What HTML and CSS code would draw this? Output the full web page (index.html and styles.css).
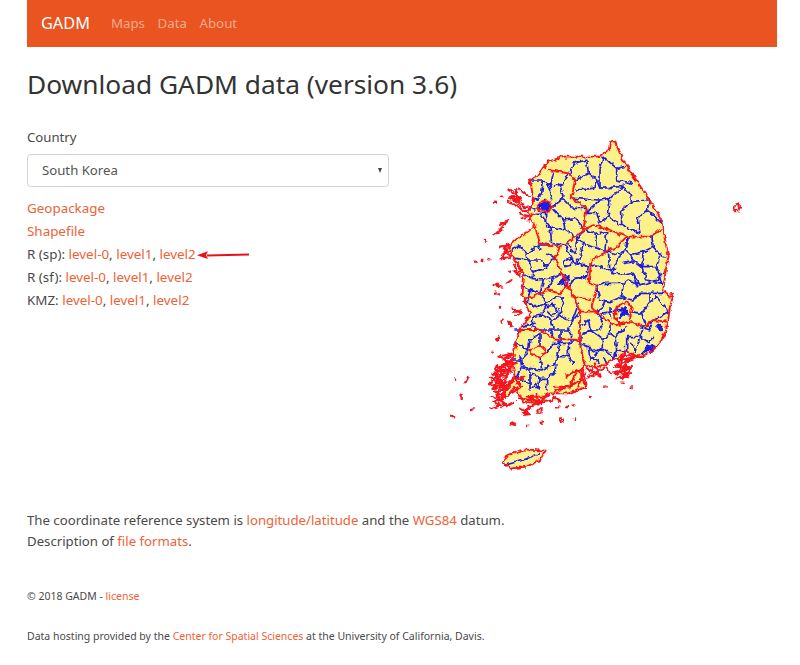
FILE: index.html
```html
<!DOCTYPE html>
<html lang="en">
<head>
<meta charset="utf-8">
<title>GADM</title>
<link rel="stylesheet" href="styles.css">
</head>
<body>
<div class="page">
  <nav class="navbar">
    <a class="brand" href="#">GADM</a>
    <a class="nav-link" href="#">Maps</a>
    <a class="nav-link" href="#">Data</a>
    <a class="nav-link" href="#">About</a>
  </nav>
  <h1 class="title">Download GADM data (version 3.6)</h1>
  <div class="row">
    <div class="left">
      <label class="label" for="country">Country</label>
      <div class="select" id="country"><span>South Korea</span><span class="caret"></span></div>
      <ul class="links">
        <li><a href="#">Geopackage</a></li>
        <li><a href="#">Shapefile</a></li>
        <li>R (sp): <a href="#">level-0</a>, <a href="#">level1</a>, <a href="#">level2</a><svg class="arrow" viewBox="0 0 54 10" width="54" height="10"><path d="M53 4.6 11 5.4" stroke="#e8101a" stroke-width="2" fill="none"/><path d="M1 5.2 12 1.2 10 5.2 12 9Z" fill="#e8101a"/></svg></li>
        <li>R (sf): <a href="#">level-0</a>, <a href="#">level1</a>, <a href="#">level2</a></li>
        <li>KMZ: <a href="#">level-0</a>, <a href="#">level1</a>, <a href="#">level2</a></li>
      </ul>
    </div>
    <svg class="map" viewBox="0 0 930 1050" width="310" height="350" fill="none" stroke-linejoin="round" stroke-linecap="round">
      <defs>
        <filter id="rough" filterUnits="userSpaceOnUse" x="0" y="0" width="930" height="1050">
          <feTurbulence type="fractalNoise" baseFrequency="0.07" numOctaves="2" seed="4" result="noise"/>
          <feDisplacementMap in="SourceGraphic" in2="noise" scale="16" xChannelSelector="R" yChannelSelector="G"/>
        </filter>
      </defs>
      <g class="map-art">
      <path class="land" d="M513 33 525 35 540 70 555 100 585 145 625 205 645 235 662 268 672 310 678 345 686 380 676 430 670 478 682 498 700 495 690 530 685 570 682 590 665 630 640 660 600 682 560 665 520 690 480 710 435 708 420 722 436 772 385 790 330 790 300 820 250 815 225 770 195 805 190 790 225 745 215 690 228 640 240 600 272 550 245 490 250 430 222 385 205 350 235 322 285 290 262 245 282 215 270 150 300 130 325 95 370 80 480 80 510 55Z"/>
      <path class="land" d="M190 997 205 975 250 958 315 962 300 990 260 1010 210 1016Z"/>
      <path class="district" d="M390 130 400 100 440 90 445 130 405 150M445 130 470 150 480 175 540 170 550 165M480 175 480 120 490 80M490 80 530 115 530 150 580 160M530 115 555 110M470 150 460 175 410 180M395 205 480 210 510 205 550 170 570 195 575 215 625 210M510 205 505 260 545 285M575 215 545 240 545 285 600 310M480 210 445 240 440 250 470 250 480 280 505 260M600 310 595 265 620 240 630 215M620 240 640 255 665 280M270 150 310 150 330 170 340 130M340 170 370 160 385 130M310 150 305 190 280 215M330 170 335 210M360 160 370 205 340 230M370 205 400 235 440 235M340 240 370 270 410 265 432 300M370 270 375 300 405 320M300 250 330 290 375 300M330 290 335 340 375 345M285 250 320 250 320 290M265 230 285 240M215 365 235 345 260 370 295 345 330 345M260 370 265 390 300 390 320 410 345 385M222 385 265 390M265 390 280 425 320 415M280 425 275 445 310 450 340 440 365 430M250 430 275 445M310 450 300 490M340 440 325 475M385 470 405 445 440 440 445 410 405 400 375 345M405 400 440 405M385 345 405 370 410 330 430 300M410 330 455 350 470 355 465 310 440 300M470 355 500 365M465 310 500 305 495 360M445 410 470 405 510 425 505 365 540 375 555 360 565 320M540 375 525 410 510 425M555 360 570 375 610 365 640 350 635 320M640 350 660 375 685 385M610 365 605 410 620 450 665 460M510 425 550 435 580 430 600 465 650 450 670 430M660 375 650 410 665 460M605 410 650 410M470 470 495 460 550 460 565 450 600 465M550 460 545 500 510 515 480 510 470 470M510 515 495 510 490 530 470 545M545 500 575 510 600 490 630 490 630 515 605 550 575 545M630 490 670 490M630 515 650 500 685 545 640 570M605 550 615 580M370 505 360 555 395 575 415 520M360 555 335 570 340 600 300 600M395 575 385 600 340 600M395 575 420 545M300 490 320 520 350 500 370 505M320 520 305 555 280 560 275 590 300 600M305 555 335 570M250 510 290 530 320 520M320 530 340 525 355 545 335 555 320 540M420 640 430 610 450 600 490 630 510 610 525 620 560 590M490 630 490 655 520 680M510 610 510 585M490 655 460 665 445 650 420 640M525 620 530 660 560 665M560 620 600 620 610 590M560 620 560 665M600 620 625 640 640 620M600 620 585 665M445 650 450 690 470 670 490 655M470 545 490 580 480 600 450 600M445 570 450 600M225 640 265 660 270 630 300 610M270 660 240 690 215 690M300 645 300 610M320 665 345 640 360 640 350 680 345 725M345 640 385 640 385 680 400 700M385 640 410 630M350 680 385 680M300 680 305 720 270 715 245 710 240 680M305 720 345 700M270 715 270 780 285 760 295 780 300 745 320 745 345 725M245 710 230 740 270 760M300 745 280 730 270 745M320 745 320 780M197 1005 250 990 300 970M380 390 395 385 395 405 375 410 370 395ZM360 460 375 435 385 445 380 470 370 455M615 665 640 645M520 540 565 545 540 560M270 240 275 225M300 360 295 345M320 370 345 385M245 470 270 480 265 510M270 480 300 490M225 600 270 600M330 600 340 625M395 620 385 600M420 590 445 570M510 560 510 530M550 400 585 395 605 410M585 395 570 375M590 470 580 430M430 340 420 380 405 400M480 550 520 545M600 590 630 600 640 570M575 640 585 665M530 660 520 690M455 680 480 700M490 680 500 700M285 580 245 590M360 600 360 640"/>
      <path class="dense" d="M295 235 320 215 305 240 330 225 315 210 325 240 300 225 335 232M360 460 385 440M545 535 565 555 550 545 540 560 560 535M650 590 665 600 655 585 660 600M608 668 625 650 632 665 640 650"/>
      <path class="outline" d="M513 33 525 35 540 70 555 100 585 145 625 205 645 235 662 268 672 310 678 345 686 380 676 430 670 478 682 498 700 495 690 530 685 570 682 590 665 630 640 660 600 682 560 665 520 690 480 710 435 708 420 722 436 772 385 790 330 790 300 820 250 815 225 770 195 805 190 790 225 745 215 690 228 640 240 600 272 550 245 490 250 430 222 385 205 350 235 322 285 290 262 245 282 215 270 150 300 130 325 95 370 80 480 80 510 55ZM190 997 205 975 250 958 315 962 300 990 260 1010 210 1016ZM325 120 385 130 405 150 395 205 440 235 430 300 405 320 375 345M430 300 460 285 510 300 560 320 630 320 660 300M560 320 530 350 500 365 455 390 445 460 470 470 455 530 470 545M285 290 300 340 360 350 345 385 365 430 385 470 400 500 450 510M250 510 300 490 320 480 360 490 380 470M400 500 420 545 470 545M470 545 510 580 530 585 570 575 610 590 640 570 680 575M240 600 300 600 340 625 410 630 420 640 420 545M420 640 430 690 435 710M530 530 560 515 575 535 570 570 540 585 525 560ZM270 660 300 645 320 665 300 680 275 675ZM290 225 320 210 340 230 325 245 295 240ZM620 590 640 570M205 175 220 190 235 175 270 200M210 205 260 235M245 265 280 250 265 275M880 232 890 225 900 230 895 242 882 240Z"/>
      <path class="isle" d="M175 680 220 670 190 690 230 700 180 710 215 725 165 720 195 735 150 745 190 755 155 765 205 775 165 785 190 800 160 815 185 825 150 835M160 730 200 770 170 750 215 760M175 705 160 745 185 715 175 770 205 725 190 780 220 745M180 675 205 705 225 675 210 720M155 800 195 820 170 800 200 830 225 815 180 835M230 760 250 740 225 745 245 770 210 790M150 760 175 745 160 780 185 760 170 800 195 790M170 715 195 700 210 715 190 730 175 740M530 690 575 690 525 710 570 715 520 730 575 730 530 745 565 740M545 695 535 735 560 700 550 745 575 710M440 715 480 740 465 700 445 745 500 710 510 730M425 715 440 765 420 745 435 730M380 740 410 720 390 770 420 750 375 775M405 725 430 720 415 770M340 770 380 770 345 785M240 805 300 815 260 800 325 800 275 825 340 810M290 795 305 825 320 790M240 835 270 850 245 850 268 835 255 855M560 675 600 680 540 690 620 675M520 690 555 670 530 705M205 180 240 200 210 200 235 215 225 180 250 225M240 230 205 215 260 245M180 350 205 345 185 385 215 380 195 365M200 340 190 370 210 360M220 400 240 440 220 420 245 425 230 400M215 535 245 545 230 555M180 285 205 270 170 310 185 300M160 315 175 305M240 250 270 260M160 465 185 470M200 460 215 450M292 838 305 838 305 848 293 848ZM360 865 372 865 368 875 360 872Z"/>
      <path class="isle-dots" d="M45 745V750M85 740 75 760M65 795V803M35 855 42 865M92 837H95M135 330V335M125 390H130M105 395H107M145 388H148M165 488H167M180 528V530M185 572V575M210 580V586M170 630 178 622M155 665V668M210 880 225 885M405 865V868M305 878H308M262 888H265M450 798H452M495 770H497M545 758H548M572 775H575M165 215H168M185 200H188M380 828H384M398 826H400M350 832H355M340 800 360 815M265 830H270M175 490H180M205 575 215 585M225 545H235M170 462H178M205 425H210"/>
      </g>
    </svg>
  </div>
  <p class="note">The coordinate reference system is <a href="#">longitude/latitude</a> and the <a href="#">WGS84</a> datum.<br>Description of <a href="#">file formats</a>.</p>
  <p class="small copyright">© 2018 GADM - <a href="#">license</a></p>
  <p class="small hosting">Data hosting provided by the <a href="#">Center for Spatial Sciences</a> at the University of California, Davis.</p>
</div>
</body>
</html>
```

FILE: styles.css
```css
* { box-sizing: border-box; }
body {
  margin: 0;
  background: #fff;
  color: #4a4a4a;
  font-family: "Noto Sans", "Open Sans", sans-serif;
  font-size: 13.2px;
  line-height: 21px;
}
a { color: #ee6236; text-decoration: none; }
.page { padding: 0 23px 0 27px; }
.navbar {
  display: flex;
  align-items: center;
  height: 47px;
  padding-left: 14px;
  background: #e95420;
}
.brand { color: #fff; font-size: 16.3px; margin-right: 21px; }
.nav-link { color: rgba(255, 255, 255, 0.5); font-size: 13.3px; margin-right: 12.5px; }
.title {
  margin: 19px 0 0;
  font-size: 26.3px;
  line-height: 36px;
  font-weight: 400;
  color: #333;
}
.row { display: flex; align-items: flex-start; margin-top: 25px; }
.left { width: 362px; margin-right: 51px; }
.map { display: block; flex: none; margin-top: 3px; }
.map-art { filter: url(#rough); }
.label { display: block; line-height: 21px; }
.select {
  display: flex;
  align-items: center;
  justify-content: space-between;
  height: 33px;
  margin-top: 6px;
  padding: 0 6px 0 14px;
  border: 1px solid #ced4da;
  border-radius: 4px;
  color: #555;
}
.caret {
  width: 0;
  height: 0;
  border-left: 2.5px solid transparent;
  border-right: 2.5px solid transparent;
  border-top: 5px solid #444;
}
.links { list-style: none; margin: 10px 0 0; padding: 0; font-size: 13.4px; }
.links li { height: 23px; line-height: 23px; white-space: nowrap; }
.arrow { vertical-align: -1px; }
.land { fill: #fdf18c; }
.district { stroke: #1a1ae6; stroke-width: 5; }
.dense { stroke: #1a1ae6; stroke-width: 8; }
.outline { stroke: #f5141e; stroke-width: 5.5; }
.isle { stroke: #f5141e; stroke-width: 6; }
.isle-dots { stroke: #f5141e; stroke-width: 7; }
.note { margin: 30px 0 0; }
.small { font-size: 10.5px; line-height: 16px; }
.copyright { margin: 36px 0 0; }
.hosting { margin: 24px 0 0; }
```
